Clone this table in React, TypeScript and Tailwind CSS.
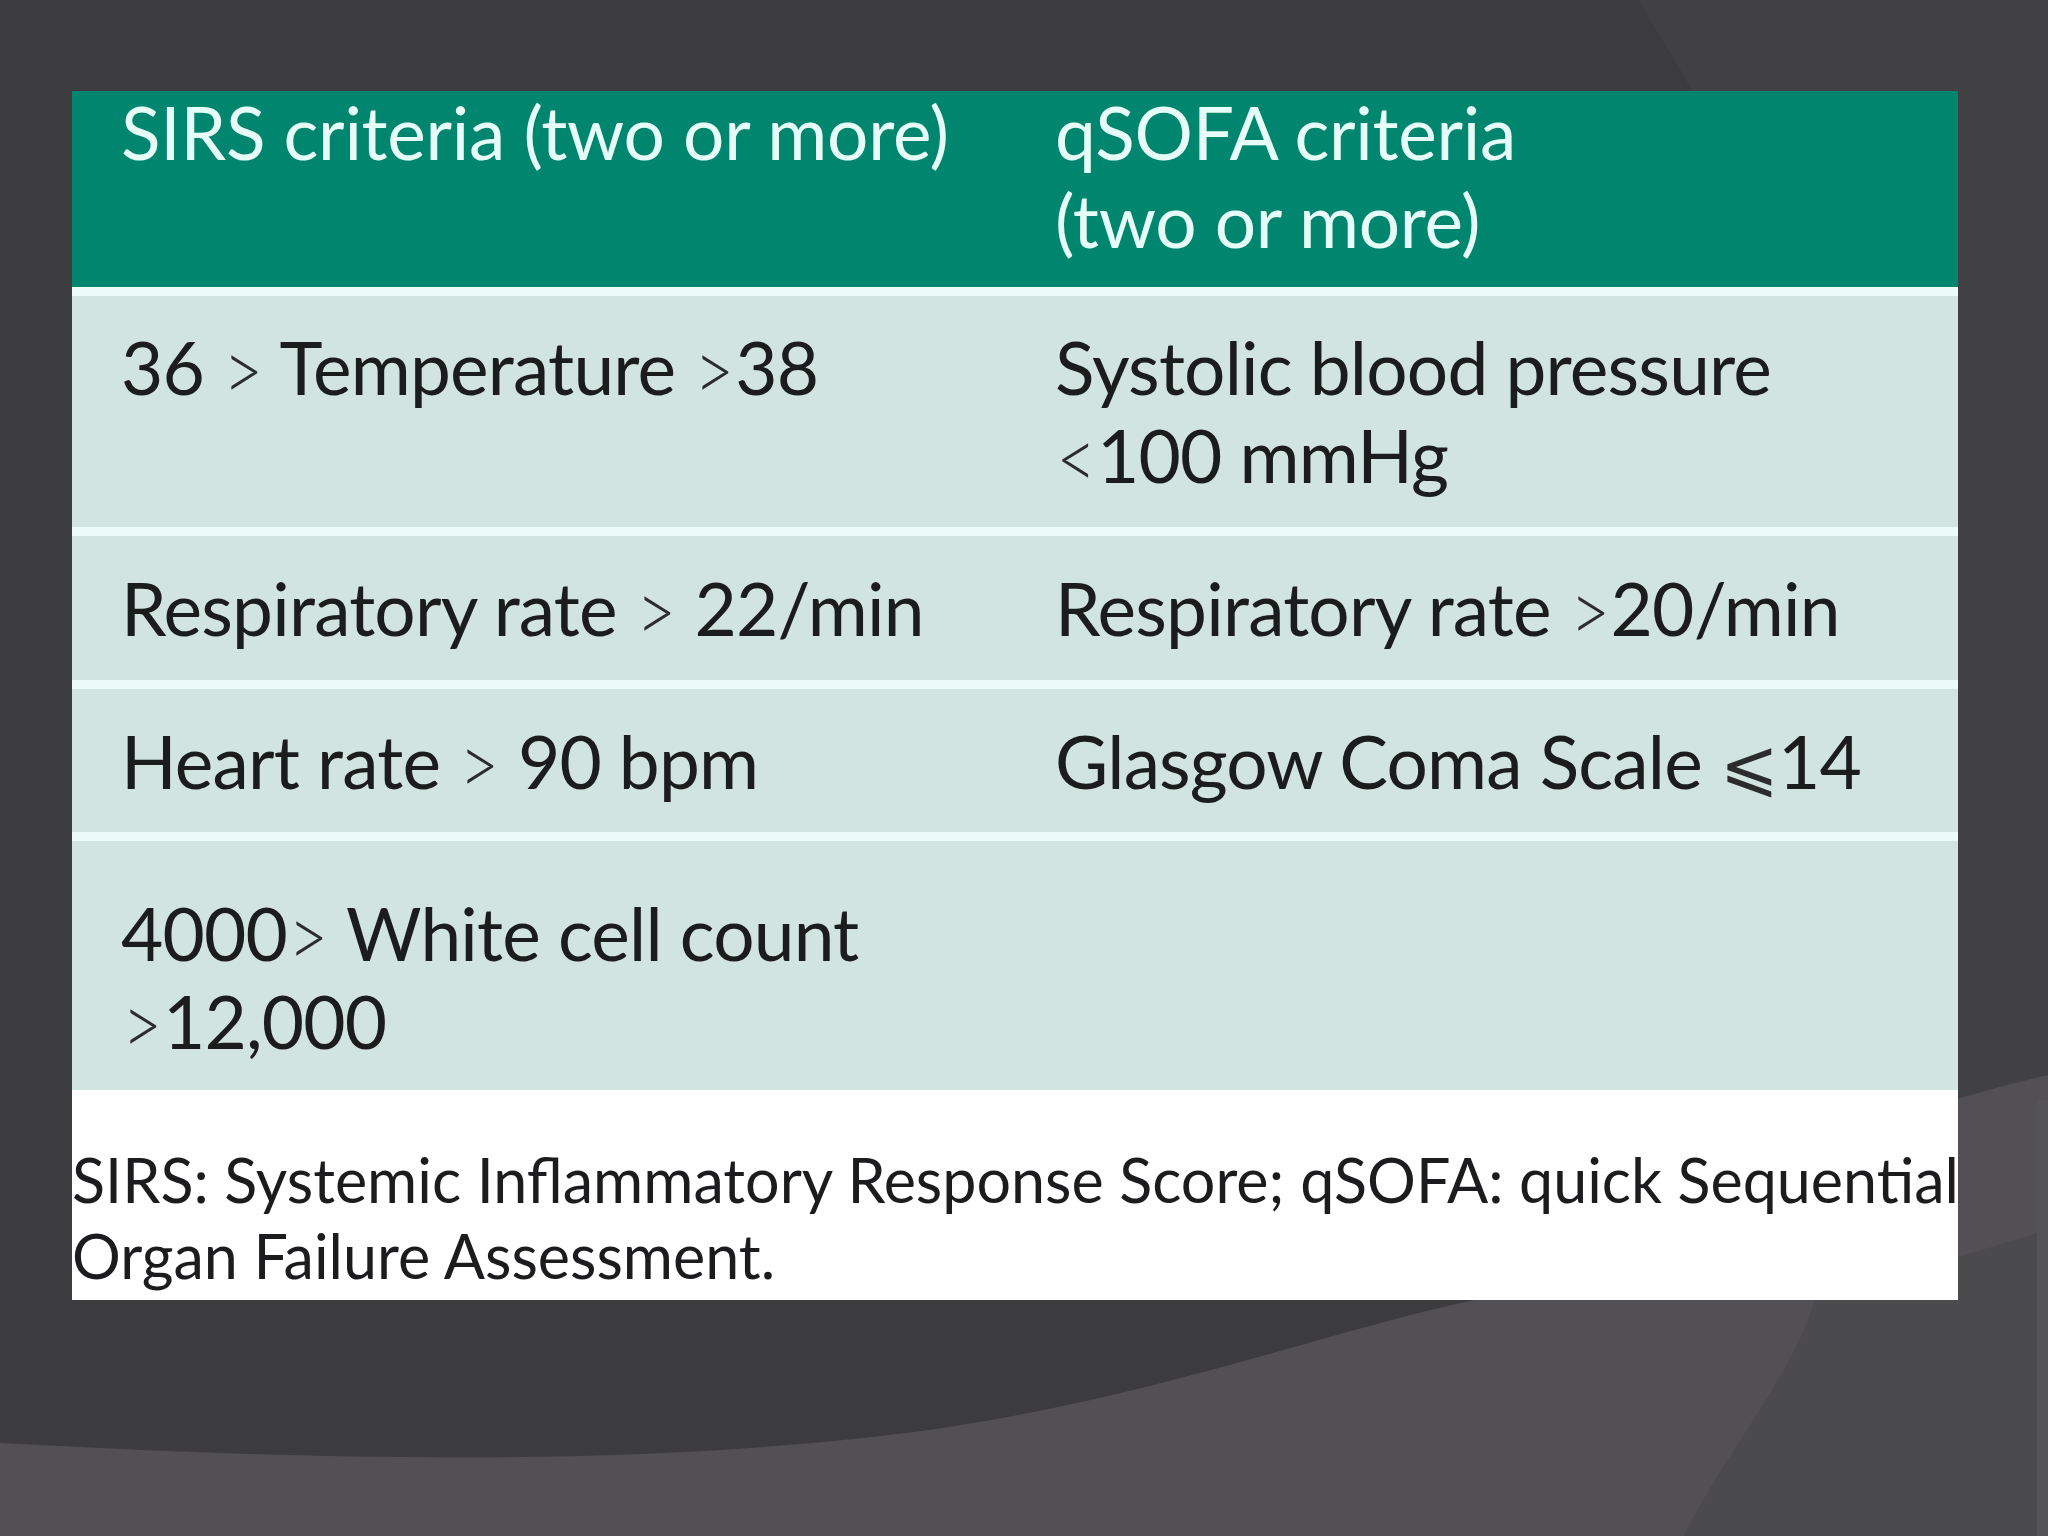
import React from "react";

const rows = [
  { left: ["36 > Temperature >38"], right: ["Systolic blood pressure", "<100 mmHg"], box: "h-[231px] pt-[27px]" },
  { left: ["Respiratory rate > 22/min"], right: ["Respiratory rate >20/min"], box: "h-[144px] pt-[28px]" },
  { left: ["Heart rate > 90 bpm"], right: ["Glasgow Coma Scale ⩽14"], box: "h-[143px] pt-[28px]" },
  { left: ["4000> White cell count", ">12,000"], right: [], box: "h-[249px] pt-[48px]" },
];

// the comparison signs in the slide are thin, tall chevrons
function Line({ text }: { text: string }) {
  const parts = text.split(/([<>⩽])/);
  return (
    <div>
      {parts.map((p, i) => {
        if (p === "<" || p === ">")
          return (
            <span
              key={i}
              className="-mx-[3px] inline-block translate-y-[6px] scale-x-[0.82] text-[84px] leading-[0] font-light text-[#2b2c2c]"
            >
              {p}
            </span>
          );
        if (p === "⩽")
          return (
            <span key={i} className="font-['DejaVu_Sans'] text-[70px] font-extralight text-[#2b2c2c]">
              {p}
            </span>
          );
        return <span key={i}>{p}</span>;
      })}
    </div>
  );
}

function Backdrop() {
  return (
    <svg className="absolute inset-0" width="2048" height="1536" viewBox="0 0 2048 1536">
      <rect width="2048" height="1536" fill="#3c3b3d" />
      <path d="M1639 0 C1660 40 1690 80 1700 110 C1780 400 1880 800 1960 1100 L2048 1075 L2048 0 Z" fill="#414042" />
      <path
        d="M0 1443 C250 1456 600 1472 914 1432 C1150 1400 1330 1330 1475 1300 C1700 1200 1850 1120 2048 1075 L2048 1536 L0 1536 Z"
        fill="#525054"
      />
      <path d="M1815 1300 C1790 1380 1720 1460 1684 1536 L2048 1536 L2048 1230 Z" fill="#4b4a4d" />
      <path d="M2037 1100 L2048 1100 L2048 1536 L2037 1536 Z" fill="#545356" />
    </svg>
  );
}

export default function App() {
  return (
    <main className="relative h-[1536px] w-[2048px] overflow-hidden bg-[#3c3b3d] font-['Lato','DejaVu_Sans',sans-serif]">
      <Backdrop />
      <div className="relative pl-[72px] pt-[91px]">
        <div className="w-[1886px]">
          <div className="grid h-[196px] grid-cols-[934px_1fr] bg-[#00866f] text-[73px] leading-[88px] tracking-[-0.3px] text-[#e6fcf6]">
            <div className="-mt-[3px] pl-[49px] whitespace-nowrap">SIRS criteria (two or more)</div>
            <div className="-mt-[3px] pl-[49px]">
              <div>qSOFA criteria</div>
              <div>(two or more)</div>
            </div>
          </div>
          {rows.map((row, i) => (
            <div key={i} className="border-t-[9px] border-[#eefcf9]">
              <div
                className={`grid grid-cols-[934px_1fr] bg-[#d2e4df] text-[73px] leading-[88px] tracking-[-0.8px] text-[#1b1c1c] ${row.box}`}
              >
                <div className="pl-[49px] whitespace-nowrap">
                  {row.left.map((t) => (
                    <Line key={t} text={t} />
                  ))}
                </div>
                <div className="pl-[49px] whitespace-nowrap">
                  {row.right.map((t) => (
                    <Line key={t} text={t} />
                  ))}
                </div>
              </div>
            </div>
          ))}
          <div className="h-[210px] bg-white pt-[52px] text-[61px] leading-[76px] text-[#1c1c1e] whitespace-nowrap">
            <div>SIRS: Systemic Inflammatory Response Score; qSOFA: quick Sequential</div>
            <div>Organ Failure Assessment.</div>
          </div>
        </div>
      </div>
    </main>
  );
}
